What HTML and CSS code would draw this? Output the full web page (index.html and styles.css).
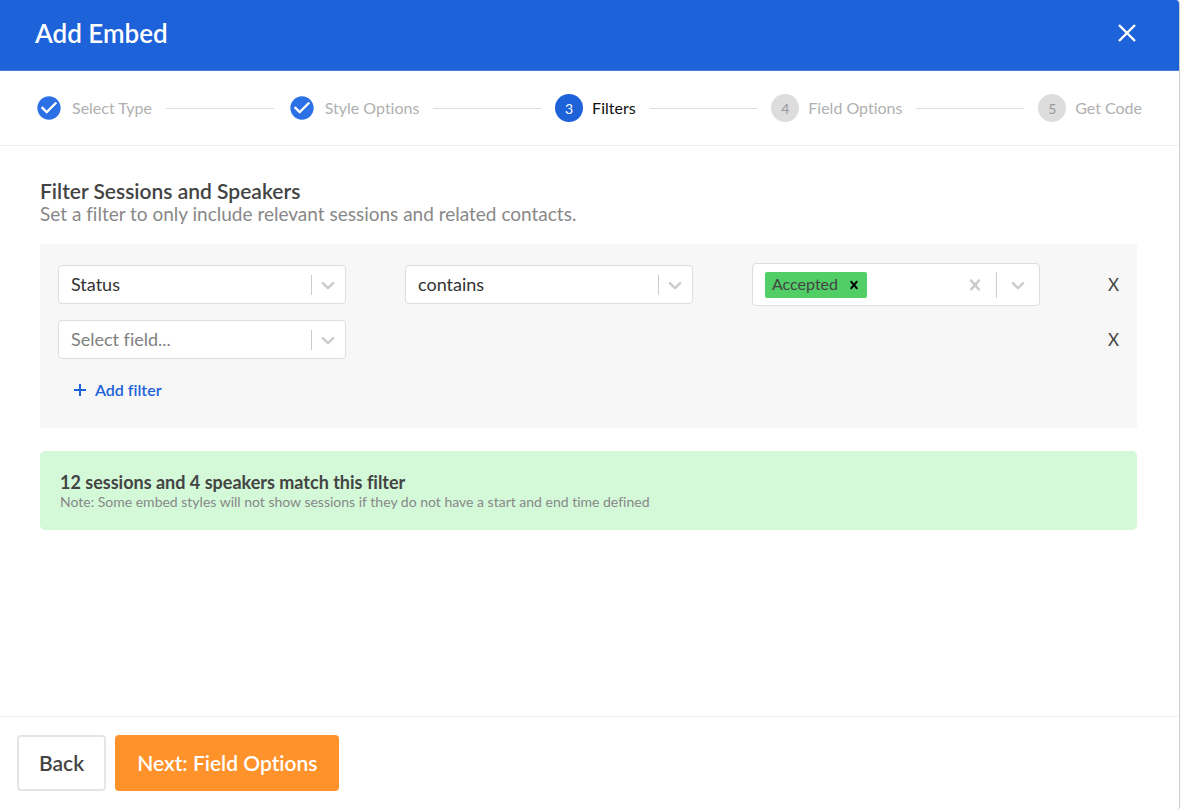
FILE: index.html
```html
<!DOCTYPE html>
<html lang="en">
<head>
    <meta charset="UTF-8">
    <meta name="viewport" content="width=device-width, initial-scale=1.0">
    <title>Add Embed</title>
    <link rel="stylesheet" href="styles.css">
</head>
<body>
    <div class="modal">
        <header class="modal-header">
            <h1>Add Embed</h1>
            <button type="button" class="close" aria-label="Close">
                <svg width="20" height="20" viewBox="0 0 20 20"><path d="M2 2l16 16M18 2L2 18" fill="none" stroke="currentColor" stroke-width="2.4"/></svg>
            </button>
        </header>

        <ol class="steps">
            <li class="step">
                <svg class="step-check" viewBox="0 0 24 24"><path d="M12 2C6.48 2 2 6.48 2 12s4.48 10 10 10 10-4.48 10-10S17.52 2 12 2zm-2 15l-5-5 1.41-1.41L10 14.17l7.59-7.59L19 8l-9 9z"/></svg>
                <span class="step-label">Select Type</span>
            </li>
            <li class="step-line" role="presentation"></li>
            <li class="step">
                <svg class="step-check" viewBox="0 0 24 24"><path d="M12 2C6.48 2 2 6.48 2 12s4.48 10 10 10 10-4.48 10-10S17.52 2 12 2zm-2 15l-5-5 1.41-1.41L10 14.17l7.59-7.59L19 8l-9 9z"/></svg>
                <span class="step-label">Style Options</span>
            </li>
            <li class="step-line" role="presentation"></li>
            <li class="step active" aria-current="step">
                <span class="step-number">3</span>
                <span class="step-label">Filters</span>
            </li>
            <li class="step-line" role="presentation"></li>
            <li class="step">
                <span class="step-number">4</span>
                <span class="step-label">Field Options</span>
            </li>
            <li class="step-line" role="presentation"></li>
            <li class="step">
                <span class="step-number">5</span>
                <span class="step-label">Get Code</span>
            </li>
        </ol>

        <main class="content">
            <h2>Filter Sessions and Speakers</h2>
            <p class="subtitle">Set a filter to only include relevant sessions and related contacts.</p>

            <div class="filters">
                <div class="filter-row">
                    <div class="select">
                        <select aria-label="Field">
                            <option selected>Status</option>
                        </select>
                        <span class="separator"></span>
                        <svg class="chevron" viewBox="0 0 20 20"><path d="M4.516 7.548c0.436-0.446 1.043-0.481 1.576 0l3.908 3.747 3.908-3.747c0.533-0.481 1.141-0.446 1.574 0 0.436 0.445 0.408 1.197 0 1.615-0.406 0.418-4.695 4.502-4.695 4.502-0.217 0.223-0.502 0.335-0.787 0.335s-0.57-0.112-0.789-0.335c0 0-4.287-4.084-4.695-4.502s-0.436-1.17 0-1.615z"/></svg>
                    </div>
                    <div class="select">
                        <select aria-label="Operator">
                            <option selected>contains</option>
                        </select>
                        <span class="separator"></span>
                        <svg class="chevron" viewBox="0 0 20 20"><path d="M4.516 7.548c0.436-0.446 1.043-0.481 1.576 0l3.908 3.747 3.908-3.747c0.533-0.481 1.141-0.446 1.574 0 0.436 0.445 0.408 1.197 0 1.615-0.406 0.418-4.695 4.502-4.695 4.502-0.217 0.223-0.502 0.335-0.787 0.335s-0.57-0.112-0.789-0.335c0 0-4.287-4.084-4.695-4.502s-0.436-1.17 0-1.615z"/></svg>
                    </div>
                    <div class="select multi">
                        <div class="values">
                            <span class="tag">
                                <span class="tag-label">Accepted</span>
                                <button type="button" aria-label="Remove Accepted">
                                    <svg width="16" height="16" viewBox="0 0 20 20"><path d="M14.348 14.849c-0.469 0.469-1.229 0.469-1.697 0l-2.651-3.030-2.651 3.029c-0.469 0.469-1.229 0.469-1.697 0-0.469-0.469-0.469-1.229 0-1.697l2.758-3.15-2.759-3.152c-0.469-0.469-0.469-1.228 0-1.697s1.228-0.469 1.697 0l2.652 3.031 2.651-3.031c0.469-0.469 1.228-0.469 1.697 0s0.469 1.229 0 1.697l-2.758 3.152 2.758 3.15c0.469 0.469 0.469 1.229 0 1.698z"/></svg>
                                </button>
                            </span>
                        </div>
                        <button type="button" class="clear" aria-label="Clear all">
                            <svg width="22" height="22" viewBox="0 0 20 20"><path d="M14.348 14.849c-0.469 0.469-1.229 0.469-1.697 0l-2.651-3.030-2.651 3.029c-0.469 0.469-1.229 0.469-1.697 0-0.469-0.469-0.469-1.229 0-1.697l2.758-3.15-2.759-3.152c-0.469-0.469-0.469-1.228 0-1.697s1.228-0.469 1.697 0l2.652 3.031 2.651-3.031c0.469-0.469 1.228-0.469 1.697 0s0.469 1.229 0 1.697l-2.758 3.152 2.758 3.15c0.469 0.469 0.469 1.229 0 1.698z"/></svg>
                        </button>
                        <span class="separator"></span>
                        <button type="button" class="toggle" aria-label="Show values">
                            <svg class="chevron" viewBox="0 0 20 20"><path d="M4.516 7.548c0.436-0.446 1.043-0.481 1.576 0l3.908 3.747 3.908-3.747c0.533-0.481 1.141-0.446 1.574 0 0.436 0.445 0.408 1.197 0 1.615-0.406 0.418-4.695 4.502-4.695 4.502-0.217 0.223-0.502 0.335-0.787 0.335s-0.57-0.112-0.789-0.335c0 0-4.287-4.084-4.695-4.502s-0.436-1.17 0-1.615z"/></svg>
                        </button>
                    </div>
                    <button type="button" class="remove">X</button>
                </div>

                <div class="filter-row">
                    <div class="select placeholder">
                        <select aria-label="Field">
                            <option selected>Select field...</option>
                        </select>
                        <span class="separator"></span>
                        <svg class="chevron" viewBox="0 0 20 20"><path d="M4.516 7.548c0.436-0.446 1.043-0.481 1.576 0l3.908 3.747 3.908-3.747c0.533-0.481 1.141-0.446 1.574 0 0.436 0.445 0.408 1.197 0 1.615-0.406 0.418-4.695 4.502-4.695 4.502-0.217 0.223-0.502 0.335-0.787 0.335s-0.57-0.112-0.789-0.335c0 0-4.287-4.084-4.695-4.502s-0.436-1.17 0-1.615z"/></svg>
                    </div>
                    <button type="button" class="remove">X</button>
                </div>

                <button type="button" class="add-filter">
                    <svg width="14" height="14" viewBox="0 0 14 14"><path d="M7 1v12M1 7h12" fill="none" stroke="currentColor" stroke-width="2"/></svg>
                    Add filter
                </button>
            </div>

            <div class="result">
                <strong>12 sessions and 4 speakers match this filter</strong>
                <p>Note: Some embed styles will not show sessions if they do not have a start and end time defined</p>
            </div>
        </main>

        <footer class="modal-footer">
            <button type="button" class="btn btn-back">Back</button>
            <button type="button" class="btn btn-next">Next: Field Options</button>
        </footer>
    </div>
</body>
</html>
```
FILE: styles.css
```css
* {
    box-sizing: border-box;
}
body {
    margin: 0;
    font-family: "Proxima Nova", Lato, sans-serif;
    font-size: 18px;
    font-variant-ligatures: none;
    color: #444;
    background-color: #fff;
}
h1, h2, p {
    margin: 0;
}
button {
    padding: 0;
    border: none;
    background: none;
    font: inherit;
    font-variant-ligatures: none;
    color: inherit;
    cursor: pointer;
}
svg {
    display: block;
    fill: currentColor;
}
.modal {
    display: flex;
    flex-direction: column;
    min-height: 100vh;
    border-right: 1px solid #ccc;
    border-radius: 0 4px 4px 0;
    overflow: hidden;
}

/* Header */
.modal-header {
    display: flex;
    align-items: center;
    justify-content: space-between;
    height: 71px;
    padding: 0 42px 4px 35px;
    background-color: #1d62d9;
    border-bottom: 1px solid #4680e0;
    color: #fff;
}
.modal-header h1 {
    font-size: 26px;
    font-weight: 600;
}

/* Stepper */
.steps {
    display: flex;
    align-items: center;
    height: 75px;
    margin: 0;
    padding: 0 37px 0 35px;
    list-style: none;
    border-bottom: 1px solid #eee;
    font-size: 16px;
    color: #b0b0b0;
}
.step {
    display: flex;
    align-items: center;
    gap: 9px;
}
.step-check {
    width: 28px;
    height: 28px;
    fill: #2b70e4;
}
.step-number {
    display: flex;
    align-items: center;
    justify-content: center;
    width: 28px;
    height: 28px;
    border-radius: 50%;
    background-color: #ddd;
    color: #999;
    font-size: 14px;
}
.step-label,
.tag-label {
    padding-bottom: 2px;
}
.step-line {
    flex: 1;
    height: 1px;
    margin: 0 14px;
    background-color: #ddd;
}
.active {
    color: #111;
}
.active .step-number {
    background-color: #1d62d9;
    color: #fff;
}

/* Content */
.content {
    flex: 1;
    padding: 32px 42px 32px 40px;
}
h2 {
    font-size: 21px;
    line-height: 25px;
    font-weight: 600;
}
.subtitle {
    font-size: 19px;
    line-height: 22px;
    color: #888;
}
.filters {
    display: flex;
    flex-direction: column;
    gap: 14px;
    margin-top: 19px;
    padding: 19px 18px 28px;
    background-color: #f7f7f7;
}
.filter-row {
    display: grid;
    grid-template-columns: repeat(3, 1fr) 20px;
    column-gap: 59px;
    align-items: center;
}
.select {
    display: flex;
    align-items: center;
    height: 39px;
    padding-right: 6px;
    background-color: #fff;
    border: 1px solid #ddd;
    border-radius: 4px;
}
.select select {
    flex: 1;
    min-width: 0;
    height: 100%;
    padding: 0 12px 2px;
    border: none;
    background: none;
    appearance: none;
    font: inherit;
    color: #333;
}
.select.placeholder select {
    color: #808080;
}
.separator {
    width: 1px;
    height: 20px;
    margin-right: 5px;
    background-color: #ccc;
}
.chevron {
    width: 22px;
    height: 22px;
    fill: #ccc;
}
.multi {
    height: 43px;
    padding-right: 10px;
}
.multi .separator {
    height: 26px;
    margin: 0 10px;
}
.values {
    display: flex;
    flex: 1;
    padding-left: 12px;
}
.tag {
    display: flex;
    align-items: center;
    gap: 8px;
    height: 26px;
    padding: 0 5px 0 7px;
    background-color: #51cf66;
    border-radius: 2px;
    font-size: 16px;
}
.tag button {
    color: #000;
}
.clear {
    color: #ccc;
}
.remove {
    grid-column: 4;
    font-size: 17px;
    text-align: right;
}
.add-filter {
    display: flex;
    align-items: center;
    align-self: flex-start;
    gap: 8px;
    margin-top: 7px;
    padding-left: 15px;
    font-size: 16px;
    line-height: 20px;
    font-weight: 600;
    color: #1d62d9;
}
.result {
    margin-top: 23px;
    padding: 20px;
    background-color: #d3f9d8;
    border-radius: 5px;
}
.result strong {
    display: block;
    font-size: 18px;
    line-height: 22px;
}
.result p {
    font-size: 14px;
    line-height: 17px;
    color: #888;
}

/* Footer */
.modal-footer {
    display: flex;
    gap: 9px;
    padding: 18px 17px 19px;
    border-top: 1px solid #f0f0f0;
}
.btn {
    height: 56px;
    padding: 0 22px 2px;
    border-radius: 4px;
    font-size: 21px;
    font-weight: 600;
}
.btn-back {
    border: 2px solid #e5e5e9;
    padding: 0 20px 2px;
}
.btn-next {
    background-color: #ff922b;
    color: #fff;
}
```
